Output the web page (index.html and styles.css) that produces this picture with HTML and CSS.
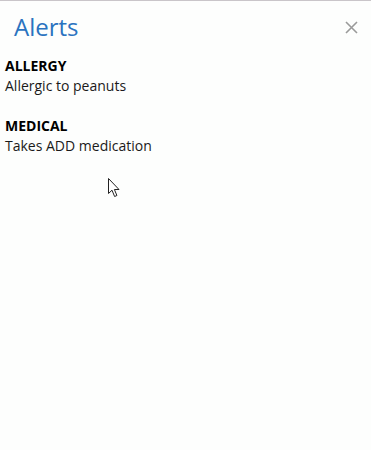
FILE: index.html
```html
<!DOCTYPE html>
<html>
<head>
<meta charset="utf-8">
<link rel="stylesheet" href="styles.css">
</head>
<body>
<div class="panel">
  <div class="header">
    <h1 class="title">Alerts</h1>
    <button class="close" aria-label="Close">
      <svg width="13" height="13" viewBox="0 0 13 13"><path d="M1 1L12 12M12 1L1 12" stroke="#9a9a9a" stroke-width="1.6" fill="none"/></svg>
    </button>
  </div>
  <div class="alerts">
    <div class="alert">
      <div class="alert-type">ALLERGY</div>
      <div class="alert-text">Allergic to peanuts</div>
    </div>
    <div class="alert">
      <div class="alert-type">MEDICAL</div>
      <div class="alert-text">Takes ADD medication</div>
    </div>
  </div>
  <svg class="cursor" width="14" height="20" viewBox="0 0 14 20"><path d="M0.5 0.5L0.5 15.5L4 12.2L6.6 18.5L8.9 17.5L6.4 11.5L11 11.5Z" fill="#fff" stroke="#222" stroke-width="1" stroke-linejoin="miter"/></svg>
</div>
</body>
</html>
```

FILE: styles.css
```css
html, body {
  margin: 0;
  padding: 0;
  background: #fdfefd;
}
body {
  font-family: "Open Sans", "Noto Sans", sans-serif;
  color: #111;
}
.panel {
  position: relative;
  height: 449px;
  border-top: 1px solid #c9c5c9;
}
.header {
  display: flex;
  justify-content: space-between;
  align-items: center;
  padding: 10px 13px 0 14px;
  height: 32px;
}
.title {
  margin: 0;
  font-weight: 400;
  font-size: 24px;
  line-height: 32px;
  color: #2a73c0;
}
.close {
  border: 0;
  background: none;
  padding: 0;
  width: 13px;
  height: 13px;
  display: flex;
}
.alerts {
  padding: 13px 5px 0 5px;
}
.alert {
  margin-bottom: 20px;
  font-size: 14px;
  line-height: 20px;
}
.alert-type {
  font-weight: 700;
  color: #000;
}
.alert-text {
  color: #1a1a1a;
}
.cursor {
  position: absolute;
  left: 108px;
  top: 177px;
}
```
